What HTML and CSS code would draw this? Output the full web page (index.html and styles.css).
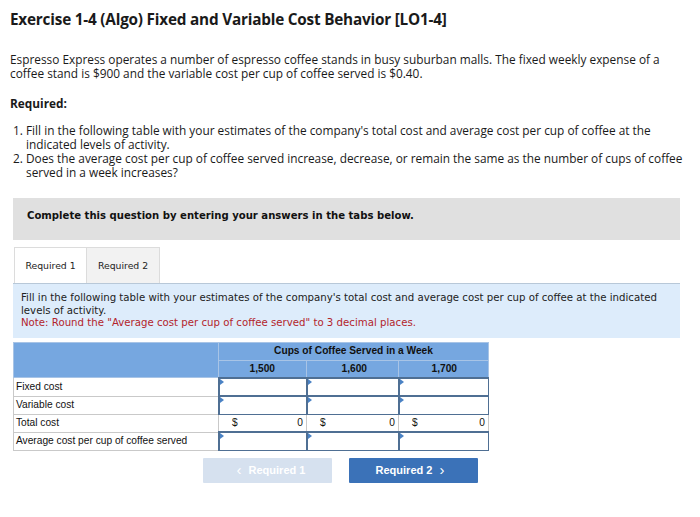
FILE: index.html
```html
<!DOCTYPE html>
<html>
<head>
<meta charset="utf-8">
<link rel="stylesheet" href="styles.css">
</head>
<body>
<h1 class="title">Exercise 1-4 (Algo) Fixed and Variable Cost Behavior [LO1-4]</h1>
<p class="intro">Espresso Express operates a number of espresso coffee stands in busy suburban malls. The fixed weekly expense of a coffee stand is $900 and the variable cost per cup of coffee served is $0.40.</p>
<p class="req-label">Required:</p>
<ol class="req-list">
  <li>Fill in the following table with your estimates of the company's total cost and average cost per cup of coffee at the indicated levels of activity.</li>
  <li>Does the average cost per cup of coffee served increase, decrease, or remain the same as the number of cups of coffee served in a week increases?</li>
</ol>
<div class="instruct">Complete this question by entering your answers in the tabs below.</div>
<div class="tabs">
  <div class="tab active">Required 1</div>
  <div class="tab">Required 2</div>
</div>
<div class="info">
  <div>Fill in the following table with your estimates of the company's total cost and average cost per cup of coffee at the indicated levels of activity.</div>
  <div class="note">Note: Round the "Average cost per cup of coffee served" to 3 decimal places.</div>
</div>
<table class="grid">
  <tr class="hdr">
    <th class="blank" rowspan="2"></th>
    <th colspan="3" class="group">Cups of Coffee Served in a Week</th>
  </tr>
  <tr class="hdr">
    <th class="num">1,500</th>
    <th class="num">1,600</th>
    <th class="num">1,700</th>
  </tr>
  <tr>
    <td class="label">Fixed cost</td>
    <td class="input"><span class="flag"></span></td>
    <td class="input"><span class="flag"></span></td>
    <td class="input"><span class="flag"></span></td>
  </tr>
  <tr>
    <td class="label">Variable cost</td>
    <td class="input"><span class="flag"></span></td>
    <td class="input"><span class="flag"></span></td>
    <td class="input"><span class="flag"></span></td>
  </tr>
  <tr>
    <td class="label">Total cost</td>
    <td class="calc"><span>$</span><span>0</span></td>
    <td class="calc"><span>$</span><span>0</span></td>
    <td class="calc"><span>$</span><span>0</span></td>
  </tr>
  <tr>
    <td class="label">Average cost per cup of coffee served</td>
    <td class="input"><span class="flag"></span></td>
    <td class="input"><span class="flag"></span></td>
    <td class="input"><span class="flag"></span></td>
  </tr>
</table>
<div class="nav">
  <div class="btn prev"><span class="chev">&lsaquo;</span> Required 1</div>
  <div class="btn next">Required 2 <span class="chev">&rsaquo;</span></div>
</div>
</body>
</html>
```

FILE: styles.css
```css
html, body {
  margin: 0;
  padding: 0;
  background: #fff;
}
body {
  padding: 0 10px;
  font-family: "Open Sans", "Liberation Sans", sans-serif;
  color: #1a1a1a;
  width: 680px;
  box-sizing: content-box;
}
.title {
  font-size: 15.3px;
  font-weight: 700;
  margin: 9px 0 0;
  line-height: 20px;
  letter-spacing: -0.2px;
}
.intro {
  font-size: 11.85px;
  line-height: 14px;
  margin: 23px 0 0;
}
.req-label {
  font-size: 11.85px;
  font-weight: 700;
  margin: 16px 0 0;
  line-height: 14px;
}
.req-list {
  font-size: 11.85px;
  line-height: 14px;
  margin: 13px 0 0;
  padding-left: 16px;
}
.instruct {
  margin: 19px 0 0 3px;
  width: 667px;
  background: #e0e0e0;
  height: 42px;
  box-sizing: border-box;
  padding: 12px 0 0 14px;
  font-family: "DejaVu Sans", Verdana, sans-serif;
  font-size: 10.1px;
  font-weight: 700;
  color: #111;
}
.tabs {
  display: flex;
  margin: 7px 0 0 4px;
  height: 36px;
}
.tab {
  width: 73px;
  box-sizing: border-box;
  border: 1px solid #dcdcdc;
  border-bottom: none;
  background: #f2f2f2;
  font-family: "DejaVu Sans", Verdana, sans-serif;
  font-size: 9.3px;
  display: flex;
  align-items: center;
  justify-content: center;
  color: #222;
}
.tab.active {
  background: #fff;
}
.tab + .tab {
  border-left: none;
}
.info {
  margin-left: 3px;
  width: 667px;
  box-sizing: border-box;
  background: #ddecfb;
  border-top: 1px solid #b8c8d8;
  padding: 8px 8px 8px 8px;
  font-family: "DejaVu Sans", Verdana, sans-serif;
  font-size: 10.2px;
  line-height: 12.5px;
  color: #222;
}
.note {
  color: #b3242b;
}
.grid {
  margin: 4px 0 0 3px;
  border-collapse: collapse;
  font-family: "Liberation Sans", Arial, sans-serif;
  font-size: 10.2px;
  color: #111;
}
.grid th, .grid td {
  padding: 0;
  height: 16px;
  line-height: 12px;
}
.grid td {
  height: 16.5px;
}
.hdr th {
  background: #76a7e0;
  font-weight: 700;
  border: 1px solid #a8c4e6;
}
.hdr th.blank {
  width: 204px;
}
.hdr th.group {
  height: 17px;
  border-bottom: 1px solid #a8c4e6;
}
.hdr th.num {
  height: 16px;
  text-align: right;
  padding-right: 31px;
}
.hdr th.num:nth-child(1) { width: 56px; }
.hdr th.num:nth-child(2) { width: 60px; }
.hdr th.num:nth-child(3) { width: 58px; }
.grid td.label {
  border: 1px solid #c9c9c9;
  padding-left: 2px;
}
.grid td.input {
  border: 1px solid #4f6f93;
  border-width: 2px 1px 1px 2px;
  position: relative;
  background: #fff;
}
.flag {
  position: absolute;
  left: 0;
  top: 0;
  width: 0;
  height: 0;
  border-top: 3px solid transparent;
  border-bottom: 3px solid transparent;
  border-left: 4px solid #4a82c4;
}
.grid td.calc {
  border: 1px solid #c9c9c9;
  padding: 0 3px 0 13px;
}
.calc span:first-child {
  float: left;
}
.calc span:last-child {
  float: right;
}
.nav {
  display: flex;
  gap: 17px;
  margin: 7px 0 0 193px;
}
.btn {
  width: 129px;
  height: 25px;
  display: flex;
  align-items: center;
  justify-content: center;
  font-family: "Liberation Sans", Arial, sans-serif;
  font-size: 11px;
  font-weight: 700;
  border-radius: 1px;
}
.btn.prev {
  background: #d6e1ef;
  color: #fff;
}
.btn.next {
  background: #3b72b8;
  color: #fff;
}
.chev {
  font-size: 15px;
  margin: 0 7px;
  font-weight: 400;
  position: relative;
  top: -1px;
}
```
